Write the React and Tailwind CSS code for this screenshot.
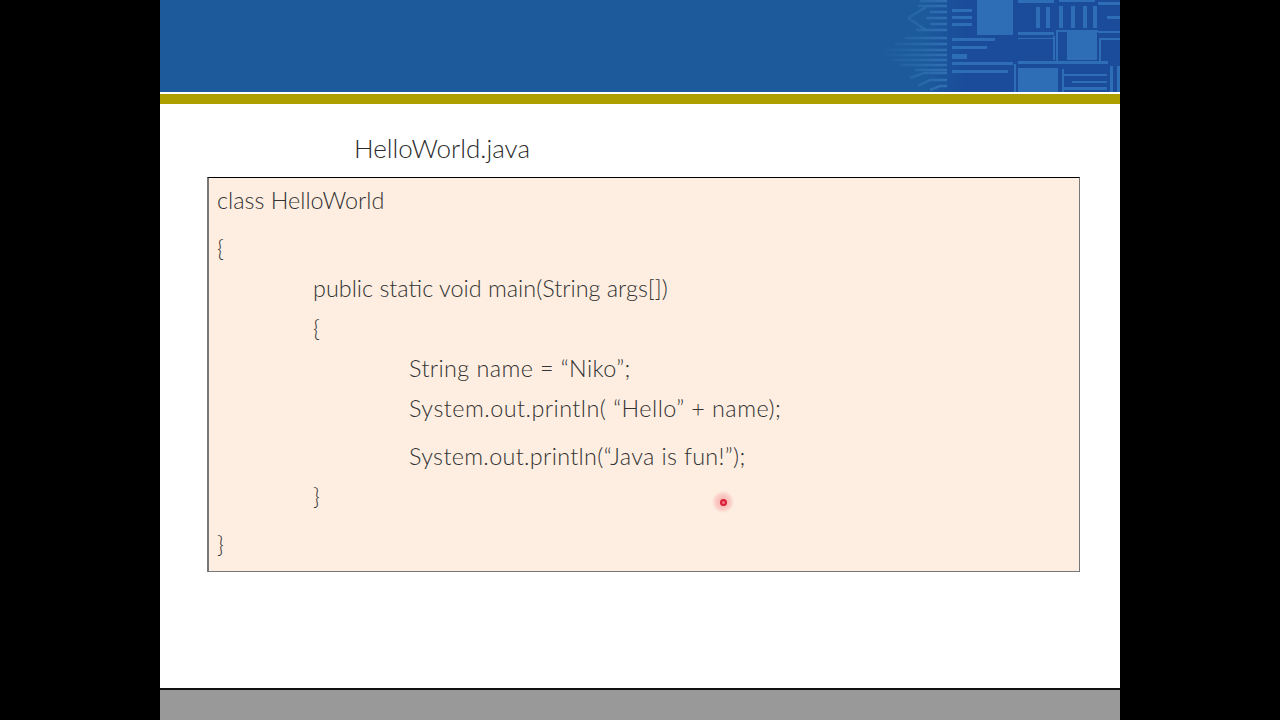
const lines = [
  { text: 'class HelloWorld', indent: 'pl-0', h: 'h-[48px]', track: 'tracking-normal' },
  { text: '{', indent: 'pl-0', h: 'h-[40px]', track: 'tracking-normal' },
  { text: 'public static void main(String args[])', indent: 'pl-[96px]', h: 'h-[40px]', track: 'tracking-normal' },
  { text: '{', indent: 'pl-[96px]', h: 'h-[40px]', track: 'tracking-normal' },
  { text: 'String name = “Niko”;', indent: 'pl-[192px]', h: 'h-[40px]', track: 'tracking-[0.4px]' },
  { text: 'System.out.println( “Hello” + name);', indent: 'pl-[192px]', h: 'h-[48px]', track: 'tracking-[0.47px]' },
  { text: 'System.out.println(“Java is fun!”);', indent: 'pl-[192px]', h: 'h-[40px]', track: 'tracking-[0.33px]' },
  { text: '}', indent: 'pl-[96px]', h: 'h-[48px]', track: 'tracking-normal' },
  { text: '}', indent: 'pl-0', h: 'h-[40px]', track: 'tracking-normal' },
]

// circuit board art, x values are page px (viewBox starts at 860)
const blocks = [
  [977, 0, 36, 35], [1018, 0, 36, 3], [1018, 32, 36, 3],
  [952, 9, 20, 3], [952, 16, 20, 3], [952, 23, 20, 3],
  [1036, 7, 4, 21], [1046, 7, 4, 21],
  [1059, 6, 4, 22], [1071, 6, 4, 22], [1083, 6, 4, 22], [1093, 6, 4, 22],
  [1059, 0, 36, 2], [1098, 2, 22, 3], [1107, 16, 13, 3],
  [1067, 32, 30, 28], [1056, 30, 42, 2], [1056, 30, 2, 32],
  [1098, 31, 22, 2], [1099, 38, 21, 2], [1099, 38, 2, 24],
  [952, 38, 43, 3], [952, 46, 35, 3], [952, 54, 15, 5], [952, 62, 61, 3], [952, 70, 56, 3],
  [1018, 38, 35, 1], [1053, 36, 2, 24], [1018, 61, 90, 3],
  [1014, 64, 2, 28], [1018, 68, 40, 24],
  [1062, 69, 2, 23], [1062, 74, 45, 2], [1072, 81, 35, 2], [1062, 87, 45, 3],
  [1110, 66, 3, 26], [1117, 66, 3, 26],
]

const traces = [
  'M920 1 H947', 'M918 6 H947', 'M930 12 H947', 'M908 18 L926 7',
  'M908 18 L926 30', 'M926 18 H947', 'M930 24 H947', 'M916 30 H947',
  'M905 38 H947', 'M895 44 H947', 'M885 50 H947', 'M880 55 H947', 'M890 60 H947',
  'M900 65 H947', 'M915 70 H947', 'M910 78 L924 73 H947', 'M918 86 L930 80 H947', 'M930 90 L940 86 H947',
]

function CircuitArt() {
  return (
    <svg width="260" height="92" viewBox="860 0 260 92" className="shrink-0">
      <defs>
        <linearGradient id="dark" gradientUnits="userSpaceOnUse" x1="925" y1="0" x2="965" y2="0">
          <stop offset="0" stopColor="#1a4c9b" stopOpacity="0" />
          <stop offset="1" stopColor="#1a4c9b" />
        </linearGradient>
        <linearGradient id="fade" gradientUnits="userSpaceOnUse" x1="880" y1="0" x2="945" y2="0">
          <stop offset="0" stopColor="#2f6fb0" stopOpacity="0" />
          <stop offset="1" stopColor="#2f6fb0" />
        </linearGradient>
      </defs>
      <rect x="925" y="0" width="195" height="92" fill="url(#dark)" />
      <g stroke="url(#fade)" strokeWidth="2.5" fill="none">
        {traces.map((d, i) => (
          <path key={i} d={d} />
        ))}
      </g>
      <g fill="#2d6eb6">
        {blocks.map(([x, y, w, h], i) => (
          <rect key={i} x={x} y={y} width={w} height={h} />
        ))}
      </g>
    </svg>
  )
}

export default function App() {
  return (
    <div className="h-[720px] w-full bg-black flex justify-center overflow-hidden font-['Lato',sans-serif] text-[#333]">
      <div className="relative w-[960px] h-full bg-white flex flex-col">
        <div className="h-[92px] bg-[#1c5a9b] flex justify-end overflow-hidden">
          <CircuitArt />
        </div>
        <div className="h-[2px] bg-white" />
        <div className="h-[10px] bg-[#ae9f00]" />

        <div className="flex-1 flex flex-col pl-[47px]">
          <div className="h-[73px] pl-[147px] pt-[27px] text-[26px] leading-[34px] font-light text-[#2b2b2b]">
            HelloWorld.java
          </div>
          <div className="w-[873px] h-[395px] bg-[#fdeee1] border border-l-2 border-[#777] border-t-black pl-[8px] pt-[2px] text-[23.4px] font-light">
            {lines.map((line, i) => (
              <div key={i} className={`${line.h} ${line.indent} ${line.track} flex items-start leading-[40px]`}>
                {line.text}
              </div>
            ))}
          </div>
        </div>

        <div className="h-[2px] bg-[#111]" />
        <div className="h-[30px] bg-[#999]" />

        <div className="absolute left-[552px] top-[491px] w-[22px] h-[22px] rounded-full bg-[radial-gradient(circle,#f0506070_0%,#f0506030_50%,#f0506000_72%)] flex items-center justify-center">
          <div className="w-[7px] h-[7px] rounded-full border-2 border-[#d81e36] bg-[#f27a85]" />
        </div>
      </div>
    </div>
  )
}
